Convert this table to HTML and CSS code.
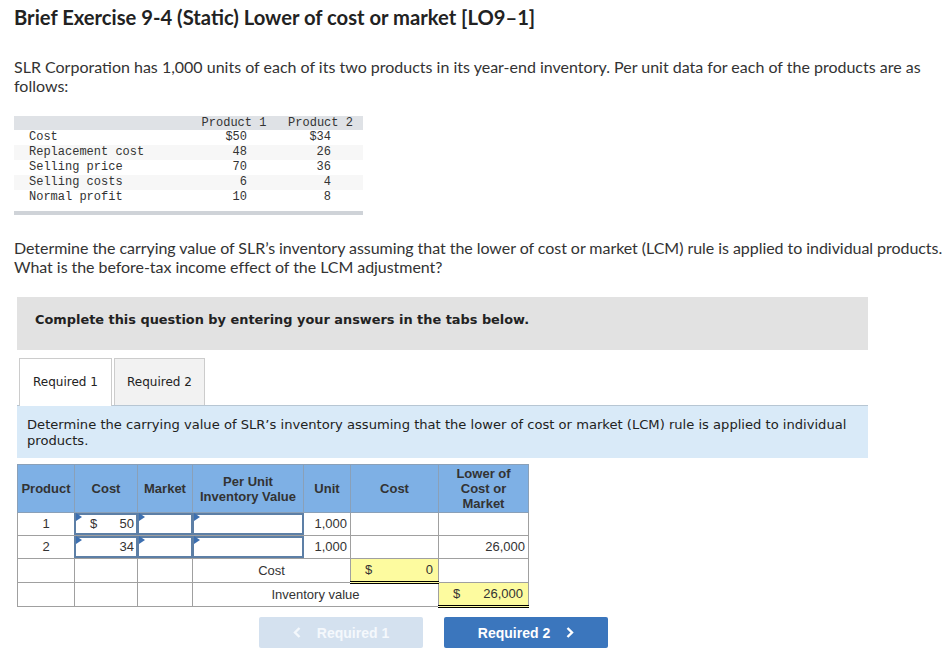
FILE: index.html
```html
<!DOCTYPE html>
<html>
<head>
<meta charset="utf-8">
<link rel="stylesheet" href="styles.css">
</head>
<body>
<div class="page">
  <h1 class="title">Brief Exercise 9-4 (Static) Lower of cost or market [LO9–1]</h1>
  <p class="intro">SLR Corporation has 1,000 units of each of its two products in its year-end inventory. Per unit data for each of the products are as follows:</p>

  <table class="data">
    <thead>
      <tr><th class="lbl"></th><th>Product 1</th><th>Product 2</th></tr>
    </thead>
    <tbody>
      <tr><td class="lbl">Cost</td><td class="v1">$50</td><td class="v2">$34</td></tr>
      <tr class="alt"><td class="lbl">Replacement cost</td><td class="v1">48</td><td class="v2">26</td></tr>
      <tr><td class="lbl">Selling price</td><td class="v1">70</td><td class="v2">36</td></tr>
      <tr class="alt"><td class="lbl">Selling costs</td><td class="v1">6</td><td class="v2">4</td></tr>
      <tr><td class="lbl">Normal profit</td><td class="v1">10</td><td class="v2">8</td></tr>
      <tr class="spacer"><td colspan="3"></td></tr>
      <tr class="foot"><td colspan="3"></td></tr>
    </tbody>
  </table>

  <p class="question">Determine the carrying value of SLR’s inventory assuming that the lower of cost or market (LCM) rule is applied to individual products. What is the before-tax income effect of the LCM adjustment?</p>

  <div class="instructions">Complete this question by entering your answers in the tabs below.</div>

  <div class="tabs">
    <div class="tab active">Required 1</div>
    <div class="tab">Required 2</div>
  </div>
  <div class="panel">Determine the carrying value of SLR’s inventory assuming that the lower of cost or market (LCM) rule is applied to individual products.</div>

  <table class="answer">
    <colgroup>
      <col style="width:57px"><col style="width:63px"><col style="width:55px"><col style="width:111px"><col style="width:47px"><col style="width:88px"><col style="width:90px">
    </colgroup>
    <thead>
      <tr>
        <th>Product</th><th>Cost</th><th>Market</th><th>Per Unit<br>Inventory Value</th><th>Unit</th><th>Cost</th><th>Lower of<br>Cost or<br>Market</th>
      </tr>
    </thead>
    <tbody>
      <tr>
        <td class="c">1</td>
        <td class="inp"><div class="box money"><span>$</span><span>50</span></div></td>
        <td class="inp"><div class="box"></div></td>
        <td class="inp"><div class="box"></div></td>
        <td class="r">1,000</td>
        <td></td>
        <td></td>
      </tr>
      <tr>
        <td class="c">2</td>
        <td class="inp"><div class="box money"><span></span><span>34</span></div></td>
        <td class="inp"><div class="box"></div></td>
        <td class="inp"><div class="box"></div></td>
        <td class="r">1,000</td>
        <td></td>
        <td class="r">26,000</td>
      </tr>
      <tr>
        <td></td><td></td><td></td>
        <td colspan="2" class="c">Cost</td>
        <td class="total single"><div class="money"><span>$</span><span>0</span></div></td>
        <td></td>
      </tr>
      <tr>
        <td></td><td></td><td></td>
        <td colspan="3" class="c">Inventory value</td>
        <td class="total double"><div class="money"><span>$</span><span>26,000</span></div></td>
      </tr>
    </tbody>
  </table>

  <div class="nav">
    <div class="btn disabled"><svg class="chev" width="8" height="11" viewBox="0 0 8 11"><path d="M6.5 1 L2 5.5 L6.5 10" fill="none" stroke="currentColor" stroke-width="2.4"/></svg><span>Required 1</span></div>
    <div class="btn primary"><span>Required 2</span><svg class="chev" width="8" height="11" viewBox="0 0 8 11"><path d="M1.5 1 L6 5.5 L1.5 10" fill="none" stroke="currentColor" stroke-width="2.4"/></svg></div>
  </div>
</div>
</body>
</html>
```

FILE: styles.css
```css
html, body {
  margin: 0;
  padding: 0;
  background: #ffffff;
}

.page {
  padding: 5px 0 0 14px;
  color: #333333;
  font-family: Lato, "Liberation Sans", sans-serif;
}

.title {
  margin: 0;
  font-size: 20.2px;
  line-height: 24px;
  font-weight: 700;
  color: #222222;
}

.intro {
  margin: 28px 0 0 0;
  width: 920px;
  font-size: 16px;
  line-height: 19px;
  color: #333333;
}

.data {
  margin-top: 21px;
  border-collapse: collapse;
  width: 349px;
  font-family: "Liberation Mono", "DejaVu Sans Mono", monospace;
  font-size: 12px;
  color: #333333;
}

.data th {
  background: #dfe2e6;
  font-weight: 400;
  height: 14px;
  line-height: 14px;
  padding: 0;
  text-align: center;
}

.data td {
  height: 15px;
  line-height: 15px;
  padding: 0;
}

.data .lbl {
  padding-left: 15px;
  width: 161px;
  text-align: left;
}

.data th:nth-child(2) { width: 88px; }

.data .v1 { text-align: right; padding-right: 31px; }
.data .v2 { text-align: right; padding-right: 32px; }

.data .alt td { background: #f7f7f7; }

.data .spacer td { height: 6px; line-height: 6px; }
.data .foot td { height: 4px; line-height: 4px; background: #cfd3d8; }

.question {
  margin: 23px 0 0 0;
  font-size: 16px;
  line-height: 19px;
  letter-spacing: -0.05px;
  color: #333333;
}

.instructions {
  margin: 21px 0 0 3px;
  width: 833px;
  height: 53px;
  padding-left: 18px;
  background: #e2e2e2;
  font-family: "DejaVu Sans", Verdana, sans-serif;
  font-weight: 700;
  font-size: 12.9px;
  line-height: 46px;
  color: #222222;
}

.tabs {
  display: flex;
  margin: 8px 0 0 5px;
  gap: 2px;
  height: 47px;
}

.tab {
  width: 91px;
  height: 47px;
  box-sizing: border-box;
  border: 1px solid #cccccc;
  border-bottom: none;
  background: #f2f2f2;
  font-family: "DejaVu Sans", Verdana, sans-serif;
  font-size: 12px;
  line-height: 46px;
  text-align: center;
  color: #222222;
}

.tab.active {
  background: #ffffff;
  width: 93px;
  height: 48px;
  position: relative;
  z-index: 1;
}

.panel {
  margin-left: 3px;
  width: 851px;
  box-sizing: border-box;
  height: 53px;
  padding: 11px 10px 0 10px;
  background: #d9eaf8;
  border-top: 1px solid #b7c6d3;
  font-family: "DejaVu Sans", Verdana, sans-serif;
  font-size: 13.1px;
  line-height: 16px;
  color: #222222;
}

.answer {
  margin: 6px 0 0 3px;
  border-collapse: collapse;
  table-layout: fixed;
  width: 511px;
  font-family: "Liberation Sans", Arial, sans-serif;
  font-size: 13px;
  color: #333333;
}

.answer th {
  background: #7eb0e5;
  border: 1px solid #8aa0b8;
  font-weight: 700;
  height: 47px;
  line-height: 15px;
  padding: 0;
  text-align: center;
  color: #333333;
}

.answer td {
  border: 1px solid #a0a0a0;
  height: 22px;
  padding: 0 3px;
  line-height: 22px;
}

.answer td.c { text-align: center; }
.answer td.r { text-align: right; }

.answer td.inp {
  padding: 0;
  background: #ffffff;
}

.box {
  position: relative;
  height: 22px;
  box-sizing: border-box;
  border: 2px solid #5d7fa6;
  margin: 0 -1px;
}

.box::before {
  content: "";
  position: absolute;
  left: 0;
  top: 0;
  border-top: 4px solid transparent;
  border-bottom: 4px solid transparent;
  border-left: 6px solid #3c6fb0;
  transform: translate(0, -2px);
}

.money {
  display: flex;
  justify-content: space-between;
  padding: 0 2px 0 14px;
  line-height: 18px;
}

.box.money {
  line-height: 18px;
}

.answer td.total {
  background: #fdfb9f;
  padding: 0 3px 0 0;
}

.answer td.total .money {
  line-height: 20px;
}

.answer td.total.single,
.answer td.total.double {
  border-top: 1px solid #000000;
  border-bottom: 3px double #000000;
}

.nav {
  display: flex;
  gap: 21px;
  margin: 9px 0 0 245px;
}

.btn {
  width: 164px;
  height: 31px;
  border-radius: 2px;
  display: flex;
  align-items: center;
  justify-content: center;
  gap: 16px;
  font-family: "Liberation Sans", Arial, sans-serif;
  font-weight: 700;
  font-size: 14px;
  color: #ffffff;
}

.btn.disabled { background: #d4e1ef; color: #f4f8fc; }
.btn.primary { background: #3b76bd; }

.chev {
  display: block;
}
```
